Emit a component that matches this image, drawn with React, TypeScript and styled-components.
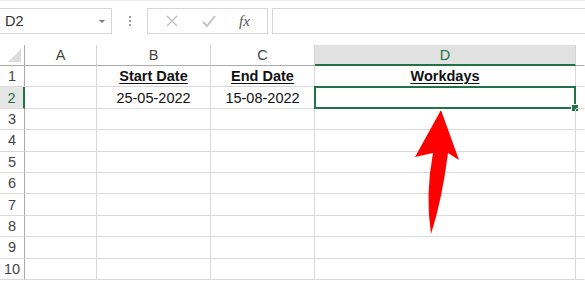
import styled, { createGlobalStyle } from 'styled-components';

const GlobalStyle = createGlobalStyle`
  body {
    margin: 0;
    background: #ffffff;
    font-family: "Liberation Sans", Arial, sans-serif;
    overflow: hidden;
  }
`;

const Page = styled.div`
  width: 585px;
  height: 282px;
  position: relative;
  overflow: hidden;
  border-top: 1px solid #ececec;
  box-sizing: border-box;
`;

const FormulaBar = styled.div`
  display: flex;
  align-items: stretch;
  height: 26px;
  margin-top: 7px;
  margin-bottom: 11px;
`;

const NameBox = styled.div`
  width: 112px;
  border: 1px solid #d6d6d6;
  border-left: none;
  display: flex;
  align-items: center;
  justify-content: space-between;
  padding: 0 6px 0 5px;
  box-sizing: border-box;
  font-size: 14.5px;
  color: #333;
`;

const Caret = styled.span`
  width: 0;
  height: 0;
  border-left: 3px solid transparent;
  border-right: 3px solid transparent;
  border-top: 3px solid #777;
`;

const Dots = styled.div`
  width: 35px;
  display: flex;
  flex-direction: column;
  align-items: center;
  justify-content: center;
  gap: 2px;
`;

const Dot = styled.span`
  width: 2px;
  height: 2px;
  background: #9a9a9a;
`;

const FxGroup = styled.div`
  width: 121px;
  border: 1px solid #d6d6d6;
  display: flex;
  align-items: center;
  justify-content: space-around;
  box-sizing: border-box;
  padding: 0 6px;
`;

const Fx = styled.span`
  font-family: "Liberation Serif", "Times New Roman", serif;
  font-style: italic;
  font-size: 15px;
  color: #555;
`;

const FormulaInput = styled.div`
  flex: 1;
  margin-left: 4px;
  border: 1px solid #d6d6d6;
  border-right: none;
`;

const Sheet = styled.div`
  display: grid;
  grid-template-columns: 25px 72px 114px 104px 261px 1fr;
  grid-template-rows: 21px repeat(10, 21.4px);
  position: relative;
`;

const Corner = styled.div`
  border-right: 1px solid #ababab;
  border-bottom: 1px solid #ababab;
  position: relative;
  &::after {
    content: '';
    position: absolute;
    right: 3px;
    bottom: 3px;
    border-left: 13px solid transparent;
    border-bottom: 13px solid #dcdcdc;
  }
`;

const ColHead = styled.div<{ $active?: boolean; $last?: boolean }>`
  display: flex;
  align-items: center;
  justify-content: center;
  font-size: 14.5px;
  color: ${p => (p.$active ? '#217346' : '#444')};
  background: ${p => (p.$active ? '#e1e1e1' : '#fff')};
  border-right: 1px solid ${p => (p.$last ? 'transparent' : '#d4d4d4')};
  border-bottom: ${p => (p.$active ? '2px solid #217346' : '1px solid #ababab')};
  box-sizing: border-box;
`;

const RowHead = styled.div<{ $active?: boolean }>`
  display: flex;
  align-items: center;
  justify-content: center;
  font-size: 14.5px;
  color: ${p => (p.$active ? '#217346' : '#444')};
  background: ${p => (p.$active ? '#e6e6e6' : '#fff')};
  border-right: ${p => (p.$active ? '2px solid #217346' : '1px solid #ababab')};
  border-bottom: 1px solid #dadada;
  box-sizing: border-box;
`;

const Cell = styled.div<{ $bold?: boolean; $last?: boolean }>`
  display: flex;
  align-items: center;
  justify-content: center;
  font-size: 14.5px;
  color: #111;
  font-weight: ${p => (p.$bold ? 700 : 400)};
  text-decoration: ${p => (p.$bold ? 'underline' : 'none')};
  text-underline-offset: 2px;
  border-right: 1px solid ${p => (p.$last ? 'transparent' : '#dadada')};
  border-bottom: 1px solid #dadada;
  box-sizing: border-box;
  position: relative;
`;

const Selection = styled.div`
  position: absolute;
  left: -1px;
  top: -1px;
  right: -1px;
  bottom: -1px;
  border: 2px solid #217346;
  &::after {
    content: '';
    position: absolute;
    right: -5px;
    bottom: -5px;
    width: 6px;
    height: 6px;
    background: #217346;
    border: 1px solid #fff;
  }
`;

const Arrow = styled.svg`
  position: absolute;
  left: 0;
  top: 0;
  pointer-events: none;
`;

const columns = ['A', 'B', 'C', 'D'];

const data: Record<number, string[]> = {
  1: ['', 'Start Date', 'End Date', 'Workdays'],
  2: ['', '25-05-2022', '15-08-2022', ''],
};

const App = () => {
  const rows = Array.from({ length: 10 }, (_, i) => i + 1);
  return (
    <>
      <GlobalStyle />
      <Page>
        <FormulaBar>
          <NameBox>
            D2
            <Caret />
          </NameBox>
          <Dots>
            <Dot />
            <Dot />
            <Dot />
          </Dots>
          <FxGroup>
            <svg width="14" height="14" viewBox="0 0 14 14">
              <path d="M2 2 L12 12 M12 2 L2 12" stroke="#bdbdbd" strokeWidth="1.4" fill="none" />
            </svg>
            <svg width="16" height="14" viewBox="0 0 16 14">
              <path d="M2 8 L6 12 L14 2" stroke="#c4c4c4" strokeWidth="2" fill="none" />
            </svg>
            <Fx>fx</Fx>
          </FxGroup>
          <FormulaInput />
        </FormulaBar>
        <Sheet>
          <Corner />
          {columns.map(c => (
            <ColHead key={c} $active={c === 'D'}>
              {c}
            </ColHead>
          ))}
          <ColHead $last />
          {rows.map(r => (
            <>
              <RowHead key={`h${r}`} $active={r === 2}>
                {r}
              </RowHead>
              {columns.map((c, ci) => (
                <Cell key={`${c}${r}`} $bold={r === 1}>
                  {data[r]?.[ci]}
                  {r === 2 && c === 'D' && <Selection />}
                </Cell>
              ))}
              <Cell key={`e${r}`} $last />
            </>
          ))}
          <Arrow width="585" height="240" viewBox="0 45 585 240">
            <path
              d="M441 110 L459 160 L448 153 Q442 200 431 234 Q425 195 433 153 L415 157 Z"
              fill="#ff0000"
            />
          </Arrow>
        </Sheet>
      </Page>
    </>
  );
};

export default App;
